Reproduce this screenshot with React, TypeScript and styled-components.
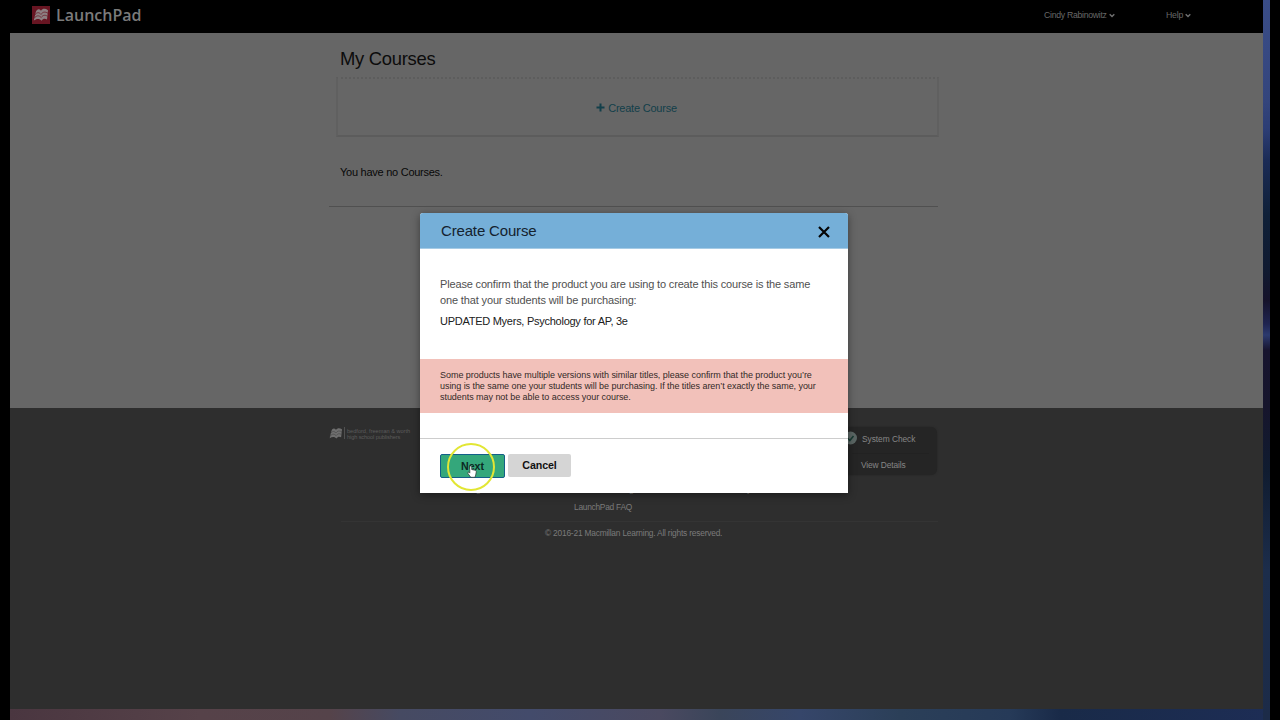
import React from "react";
import styled, { createGlobalStyle } from "styled-components";

const Global = createGlobalStyle`
  * { box-sizing: border-box; }
  html, body { margin: 0; background: #000; overflow: hidden; }
  body { font-family: "Liberation Sans", Arial, sans-serif; }
`;

const Desktop = styled.div`
  width: 1270px;
  height: 720px;
  padding-left: 10px;
  background:
    linear-gradient(to bottom, #3a4d88 0, #34457c 100px, #2c3d74 130px, #1b2b56 160px, #0f2038 215px, #101a30 270px, #15122a 300px, #1f2450 324px, #2c3a6e 335px, #17142e 350px, #16152c 410px, #101c30 470px, #1c2d4b 570px, #1c2b48 720px) right top / 7px 720px no-repeat,
    linear-gradient(to right, #000 10px, #4a3640 10px, #564249 200px, #55434a 330px, #464a62 400px, #434b6b 530px, #4a4960 660px, #3a455a 720px, #36466a 800px, #2b3f58 900px, #263a58 1010px, #192a48 1060px, #1d2d55 1270px) left bottom / 1270px 12px no-repeat,
    #000;
`;
const Window = styled.div`
  position: relative;
  width: 1253px;
  height: 709px;
  display: flex;
  flex-direction: column;
  background: #2e2e2e;
  overflow: hidden;
`;
const Line = styled.span<{ $track?: number }>`
  white-space: nowrap;
  letter-spacing: ${(p) => p.$track ?? 0}px;
`;
const TopBar = styled.header`
  flex: 0 0 33px;
  display: flex;
  align-items: flex-start;
  background: #000;
  padding-left: 22px;
`;
const BrandMark = styled.svg`
  width: 18px;
  height: 18px;
  margin-top: 6px;
`;
const BrandName = styled.div`
  flex: 1;
  margin-left: 6px;
  padding-top: 5px;
  font: 600 16px/20px "Open Sans", sans-serif;
  color: #7b7b7b;
`;
const NavItem = styled.div<{ $w: number }>`
  width: ${(p) => p.$w}px;
  display: flex;
  align-items: center;
  gap: 2px;
  padding-top: 9px;
  font-size: 8.7px;
  line-height: 13px;
  color: #686868;
`;
const Page = styled.main`
  flex: 0 0 375px;
  background: #666;
  padding: 14px 325px 0 319px;
`;
const Title = styled.h1`
  margin: 0;
  padding-left: 11px;
  font-size: 18.4px;
  line-height: 24px;
  font-weight: 400;
  color: #0c0c0c;
`;
const CreateBox = styled.div`
  width: 603px;
  height: 60px;
  margin: 6px 0 0 7px;
  display: flex;
  justify-content: center;
  align-items: center;
  gap: 3px;
  padding: 1px 2px 0 0;
  border: 2px solid #606060;
  border-top: 2px dotted #5d5d5d;
  border-bottom-color: #5c5c5c;
  font-size: 11px;
  color: #123f4a;
`;
const Empty = styled.p`
  margin: 28px 0 0;
  padding-left: 11px;
  font-size: 11px;
  line-height: 15px;
  color: #080808;
`;
const Rule = styled.hr`
  height: 1px;
  width: 609px;
  margin: 26px 0 0;
  border: 0;
  background: #505050;
`;
const Footer = styled.footer`
  flex: 1;
  padding: 19px 325px 0 319px;
  color: #7b7b7b;
`;
const FooterTop = styled.div`
  display: flex;
  justify-content: space-between;
  height: 56px;
`;
const Publisher = styled.div`
  display: flex;
  gap: 2px;
  height: 14px;
`;
const PublisherText = styled.div`
  border-left: 1px solid #505050;
  padding: 1px 0 0 2px;
  height: 12px;
  font-size: 5.6px;
  line-height: 6px;
  color: #5c5c5c;
`;
const SystemCard = styled.div`
  width: 110px;
  height: 48px;
  padding: 4px 8px 0 18px;
  margin-right: 1px;
  border-radius: 6px;
  background: #252525;
  box-shadow: 0 0 2px #252525;
  font-size: 8.4px;
  color: #858585;
`;
const SystemRow = styled.div`
  display: flex;
  align-items: center;
  gap: 4px;
  height: 15px;
`;
const Details = styled.div`
  margin: 7px 0 0 7px;
  padding: 5px 0 0 9px;
  line-height: 12px;
  border-top: 1px solid #222;
`;
const LinkRow = styled.div`
  display: grid;
  grid-template-columns: 153px 118px 6px;
  margin-left: 147px;
  height: 12px;
  font-size: 8.6px;
  line-height: 12px;
`;
const Links = styled.div`
  margin-left: 245px;
  padding-top: 6px;
  font-size: 8.4px;
  line-height: 12px;
`;
const Copyright = styled.div`
  margin: 8px 0 0 12px;
  border-top: 1px solid #343434;
  padding: 5px 0 0 204px;
  font-size: 8.4px;
  line-height: 12px;
`;
const Dialog = styled.section`
  position: absolute;
  left: 410px;
  top: 213px;
  width: 428px;
  height: 280px;
  background: #fff;
  border-radius: 3px 3px 0 0;
  box-shadow: 0 2px 9px rgba(0, 0, 0, 0.42);
`;
const DialogHead = styled.div`
  display: flex;
  justify-content: space-between;
  align-items: center;
  height: 35px;
  padding: 0 18px 0 21px;
  background: #75afd8;
  box-shadow: 0 1px 0 #a6cbe5;
  border-radius: 3px 3px 0 0;
  font-size: 15px;
  color: #14222e;
`;
const CloseIcon = styled.svg`
  width: 12px;
  height: 12px;
  margin-top: 2px;
`;
const DialogBody = styled.div`
  height: 111px;
  padding: 28px 20px 0;
  font-size: 11px;
  line-height: 16px;
  color: #505050;
`;
const Product = styled.div`
  margin-top: 5px;
  color: #202020;
`;
const Warning = styled.div`
  height: 54px;
  padding: 11px 20px 0;
  background: #f2c1ba;
  font-size: 9px;
  line-height: 11px;
  color: #332927;
`;
const Actions = styled.div`
  display: flex;
  gap: 3px;
  margin-top: 25px;
  padding: 15px 20px 0;
  border-top: 1px solid #cdcdcd;
`;
const Button = styled.button<{ $primary?: boolean }>`
  width: ${(p) => (p.$primary ? 65 : 63)}px;
  height: ${(p) => (p.$primary ? 24 : 23)}px;
  padding: 0 0 1px;
  border: ${(p) => (p.$primary ? "1px solid #145f88" : "0")};
  border-radius: 2px;
  background: ${(p) => (p.$primary ? "#34a77b" : "#d5d5d5")};
  font: bold 10.7px "Liberation Sans", Arial, sans-serif;
  letter-spacing: -0.1px;
  color: ${(p) => (p.$primary ? "#0c2922" : "#111")};
`;
const ClickRing = styled.div`
  position: absolute;
  left: 437px;
  top: 443px;
  width: 48px;
  height: 48px;
  border: 2px solid #e2e634;
  border-radius: 50%;
`;
const Pointer = styled.svg`
  position: absolute;
  left: 457px;
  top: 465px;
  width: 10px;
  height: 13px;
`;

const Waves = ({ color, gap }: { color: string; gap: string }) => (
  <>
    <path d="M1.800 14.500 3.800 6C5 3 7.200 2.500 9 4.800 10.800 2.200 13.200 2.300 16 4.200l-1 9.200c-2.200-1.200-3.800-1-5.400 1.300-1.700-2.200-5-2.500-7.800-.2Z" fill={color} />
    <g fill="none" stroke={gap} strokeWidth=".7">
      <path d="M2.500 9.200C5 5.800 7.200 6.200 9 8.400c1.800-2.700 4-2.900 7-1.200" />
      <path d="M2 12.300C4.600 9 7.200 9.300 9.200 11.500c1.800-2.600 3.800-2.800 6.300-1.300" />
    </g>
  </>
);
const Chevron = () => (
  <svg width="6" height="5" viewBox="0 0 6 5">
    <path d="M.7 1.300 3 3.600 5.300 1.300" fill="none" stroke="#707070" strokeWidth="1.400" />
  </svg>
);

export default function App() {
  return (
    <>
      <Global />
      <Desktop>
        <Window>
          <TopBar>
            <BrandMark viewBox="0 0 18 18">
              <path d="M0 0h18v18H0z" fill="#681522" />
              <Waves color="#8c8082" gap="#681522" />
            </BrandMark>
            <BrandName><Line>LaunchPad</Line></BrandName>
            <NavItem $w={122}><Line $track={-0.28}>Cindy Rabinowitz</Line><Chevron /></NavItem>
            <NavItem $w={97}><Line $track={-0.2}>Help</Line><Chevron /></NavItem>
          </TopBar>
          <Page>
            <Title><Line $track={-0.28}>My Courses</Line></Title>
            <CreateBox>
              <svg width="9" height="9" viewBox="0 0 9 9"><path d="M4.500.5v8M.5 4.500h8" stroke="#123f4a" strokeWidth="2" /></svg>
              <Line $track={-0.22}>Create Course</Line>
            </CreateBox>
            <Empty><Line $track={-0.26}>You have no Courses.</Line></Empty>
            <Rule />
          </Page>
          <Footer>
            <FooterTop>
              <Publisher>
                <svg width="13" height="13" viewBox="1 2 15 14"><Waves color="#6f6f6f" gap="#464646" /></svg>
                <PublisherText>
                  <Line>bedford, freeman &amp; worth</Line><br />
                  <Line $track={-0.1}>high school publishers</Line>
                </PublisherText>
              </Publisher>
              <SystemCard>
                <SystemRow>
                  <svg width="13" height="15" viewBox="0 0 13 15">
                    <circle cx="5.500" cy="7" r="6.500" fill="#5b6664" />
                    <path d="m2.500 7 2.300 2.500L8.500 5" fill="none" stroke="#173a32" strokeWidth="1.500" />
                  </svg>
                  <Line $track={-0.05}>System Check</Line>
                </SystemRow>
                <Details><Line $track={-0.12}>View Details</Line></Details>
              </SystemCard>
            </FooterTop>
            <LinkRow><span>g</span><span>g</span><span>y</span></LinkRow>
            <Links><Line $track={-0.27}>LaunchPad FAQ</Line></Links>
            <Copyright><Line $track={-0.21}>© 2016-21 Macmillan Learning. All rights reserved.</Line></Copyright>
          </Footer>
          <Dialog role="dialog">
            <DialogHead>
              <Line $track={-0.16}>Create Course</Line>
              <CloseIcon viewBox="0 0 12 12"><path d="m1 1 10 10M11 1 1 11" stroke="#050505" strokeWidth="2.200" /></CloseIcon>
            </DialogHead>
            <DialogBody>
              <Line $track={-0.16}>Please confirm that the product you are using to create this course is the same</Line><br />
              <Line $track={-0.14}>one that your students will be purchasing:</Line>
              <Product><Line $track={-0.26}>UPDATED Myers, Psychology for AP, 3e</Line></Product>
            </DialogBody>
            <Warning>
              <Line $track={-0.04}>Some products have multiple versions with similar titles, please confirm that the product you’re</Line><br />
              <Line $track={-0.06}>using is the same one your students will be purchasing. If the titles aren’t exactly the same, your</Line><br />
              <Line $track={-0.05}>students may not be able to access your course.</Line>
            </Warning>
            <Actions>
              <Button $primary>Next</Button>
              <Button>Cancel</Button>
            </Actions>
          </Dialog>
          <ClickRing />
          <Pointer viewBox="0 0 10 13">
            <path d="M3 1.200c.9-.7 1.700 0 1.700.8v2.500l3.500.8c.8.200 1.200.7 1.100 1.500L8.700 10 8 12.300H3.800L1 8.600c-.8-1 .2-1.900 1.100-1.200l.7.700V2c0-.3 0-.6.2-.8Z" fill="#fff" stroke="#26332f" strokeWidth=".7" />
          </Pointer>
        </Window>
      </Desktop>
    </>
  );
}
